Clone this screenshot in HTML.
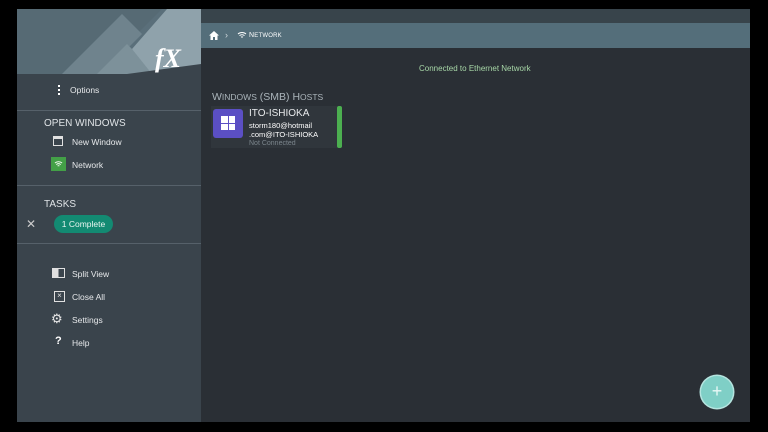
<!DOCTYPE html>
<html><head><style>
*{margin:0;padding:0;box-sizing:border-box}
body{width:768px;height:432px;background:#000;font-family:"Liberation Sans",sans-serif;position:relative;overflow:hidden}
.a{position:absolute}
.side{left:17px;top:9px;width:184px;height:413px;background:#3a444c}
.main{left:201px;top:9px;width:549px;height:413px;background:#2a2f35}
.t{color:#e6e8ea;font-size:8.5px}
.hr{height:1px;background:#56616a;left:17px;width:184px}
</style></head><body>
<div class="a side"></div>
<div class="a main"></div>
<svg class="a" style="left:17px;top:9px" width="184" height="65" viewBox="0 0 184 65">
<rect width="184" height="65" fill="#5a6f7a"/>
<polygon points="0,0 145,0 80,65 0,65" fill="#566a74"/>
<polygon points="45,65 105,5 125,25 85,65" fill="#6f838d"/>
<polygon points="80,65 110,35 135,60 130,65" fill="#7d919a"/>
<polygon points="115,40 150,0 184,0 184,65 135,65" fill="#8fa2ab"/>
<polygon points="110,65 184,55 184,65" fill="#3a444c"/>
<text x="138" y="58" font-size="26" font-style="italic" font-weight="bold" font-family="Liberation Serif,serif" fill="#fff">fX</text>
</svg>
<div class="a" style="left:201px;top:9px;width:549px;height:14px;background:#38444b"></div>
<div class="a" style="left:201px;top:23px;width:549px;height:25px;background:#546e7a"></div>
<svg class="a" style="left:209px;top:31px" width="10" height="9" viewBox="0 0 10 9"><path d="M5 0L0 4.5h1.5V9h2.5V6h2v3h2.5V4.5H10z" fill="#fff"/></svg>
<div class="a" style="left:225px;top:30px;color:#cfd8dc;font-size:9px">›</div>
<svg class="a" style="left:237px;top:31px" width="10" height="8" viewBox="0 0 10 8"><path d="M1 3a6 6 0 0 1 8 0M2.5 4.6a4 4 0 0 1 5 0M4 6.2a2 2 0 0 1 2 0" stroke="#fff" stroke-width="1" fill="none"/></svg>
<div class="a" style="left:249px;top:32px;font-size:7px;color:#fff;letter-spacing:.2px">N<span style="font-size:6px">ETWORK</span></div>
<div class="a" style="left:419px;top:64px;font-size:8px;color:#a8d8a8">Connected to Ethernet Network</div>
<div class="a" style="left:212px;top:91px;font-size:10.5px;color:#aab4ba">W<span style="font-size:8.5px">INDOWS</span> (SMB) H<span style="font-size:8.5px">OSTS</span></div>
<div class="a" style="left:211px;top:106px;width:126px;height:42px;background:#30363c"></div>
<div class="a" style="left:337px;top:106px;width:5px;height:42px;background:#4caf50;border-radius:2px"></div>
<div class="a" style="left:213px;top:109px;width:30px;height:29px;background:#5b4fc4;border-radius:3px"></div>
<div class="a" style="left:221px;top:116px;width:14px;height:14px;background:#fff"></div>
<div class="a" style="left:227.5px;top:116px;width:1px;height:14px;background:#5b4fc4"></div>
<div class="a" style="left:221px;top:122.5px;width:14px;height:1px;background:#5b4fc4"></div>
<div class="a" style="left:249px;top:108px;font-size:10px;color:#e8eaec">ITO-ISHIOKA</div>
<div class="a" style="left:249px;top:121px;font-size:7.5px;color:#fff;line-height:9px">storm180@hotmail<br>.com@ITO-ISHIOKA</div>
<div class="a" style="left:249px;top:140px;font-size:7px;color:#7b858c">Not Connected</div>
<div class="a" style="left:58px;top:85px;width:2px;height:10px;border-left:2px dotted #fff"></div>
<div class="a t" style="left:70px;top:85px">Options</div>
<div class="a hr" style="top:110px"></div>
<div class="a" style="left:44px;top:118px;font-size:10px;color:#dfe3e6">OPEN WINDOWS</div>
<div class="a" style="left:53px;top:136px;width:10px;height:10px;border:1.5px solid #e0e0e0;border-top-width:3px"></div>
<div class="a t" style="left:72px;top:137px">New Window</div>
<div class="a" style="left:51px;top:157px;width:15px;height:14px;background:#43a047"></div>
<svg class="a" style="left:54px;top:160px" width="9" height="8" viewBox="0 0 10 8"><path d="M1 3a6 6 0 0 1 8 0M2.5 4.6a4 4 0 0 1 5 0M4 6.2a2 2 0 0 1 2 0" stroke="#fff" stroke-width="1" fill="none"/></svg>
<div class="a t" style="left:72px;top:160px">Network</div>
<div class="a hr" style="top:185px"></div>
<div class="a" style="left:44px;top:199px;font-size:10px;color:#dfe3e6">TASKS</div>
<div class="a" style="left:26px;top:217px;font-size:12px;color:#ccc">✕</div>
<div class="a" style="left:54px;top:215px;width:59px;height:18px;border-radius:9px;background:#138a72;color:#e8f5f0;font-size:8.5px;text-align:center;line-height:18px">1 Complete</div>
<div class="a hr" style="top:243px"></div>
<div class="a" style="left:52px;top:268px;width:13px;height:10px;border:1.5px solid #e0e0e0;background:linear-gradient(90deg,#e0e0e0 50%,transparent 50%)"></div>
<div class="a t" style="left:72px;top:269px">Split View</div>
<div class="a" style="left:54px;top:291px;width:11px;height:11px;border:1.5px solid #e0e0e0;color:#e0e0e0;font-size:8px;line-height:8px;text-align:center">×</div>
<div class="a t" style="left:72px;top:292px">Close All</div>
<div class="a" style="left:51px;top:311px;font-size:13px;color:#e8e8e8">⚙</div>
<div class="a t" style="left:72px;top:315px">Settings</div>
<div class="a" style="left:55px;top:335px;font-size:11px;color:#fff;font-weight:bold">?</div>
<div class="a t" style="left:72px;top:338px">Help</div>
<div class="a" style="left:701px;top:376px;width:32px;height:32px;border-radius:50%;background:#7fcfc6;box-shadow:0 0 0 1.5px #b5e4df;color:#e8f8f6;font-size:18px;text-align:center;line-height:31px">+</div>
</body></html>
